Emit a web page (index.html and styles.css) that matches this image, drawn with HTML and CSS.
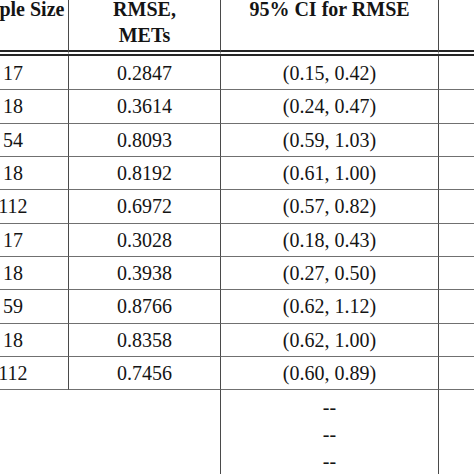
FILE: index.html
```html
<!DOCTYPE html>
<html>
<head>
<meta charset="utf-8">
<link rel="stylesheet" href="styles.css">
</head>
<body>
<table class="stats">
  <colgroup>
    <col class="c-n">
    <col class="c-rmse">
    <col class="c-ci">
    <col class="c-extra">
  </colgroup>
  <thead>
    <tr>
      <th>Sample Size</th>
      <th>RMSE,<br>METs</th>
      <th>95% CI for RMSE</th>
      <th class="last"></th>
    </tr>
  </thead>
  <tbody>
    <tr class="first"><td>17</td><td>0.2847</td><td>(0.15, 0.42)</td><td class="last"></td></tr>
    <tr><td>18</td><td>0.3614</td><td>(0.24, 0.47)</td><td class="last"></td></tr>
    <tr><td>54</td><td>0.8093</td><td>(0.59, 1.03)</td><td class="last"></td></tr>
    <tr><td>18</td><td>0.8192</td><td>(0.61, 1.00)</td><td class="last"></td></tr>
    <tr><td>112</td><td>0.6972</td><td>(0.57, 0.82)</td><td class="last"></td></tr>
    <tr><td>17</td><td>0.3028</td><td>(0.18, 0.43)</td><td class="last"></td></tr>
    <tr><td>18</td><td>0.3938</td><td>(0.27, 0.50)</td><td class="last"></td></tr>
    <tr><td>59</td><td>0.8766</td><td>(0.62, 1.12)</td><td class="last"></td></tr>
    <tr><td>18</td><td>0.8358</td><td>(0.62, 1.00)</td><td class="last"></td></tr>
    <tr><td>112</td><td>0.7456</td><td>(0.60, 0.89)</td><td class="last"></td></tr>
    <tr class="tail">
      <td colspan="2"></td>
      <td class="dashes">--<br>--<br>--</td>
      <td class="last"></td>
    </tr>
  </tbody>
</table>
</body>
</html>
```
FILE: styles.css
```css
html, body {
  margin: 0;
  padding: 0;
  background: #ffffff;
  overflow: hidden;
}

.stats {
  margin: -4px 0 0 -42px;
  border-collapse: separate;
  border-spacing: 0;
  table-layout: fixed;
  width: 581px;
  font-family: "Liberation Serif", "Times New Roman", serif;
  font-size: 20px;
  color: #141414;
}

.c-n { width: 111px; }
.c-rmse { width: 152px; }
.c-ci { width: 218px; }
.c-extra { width: 100px; }

.stats th {
  font-weight: bold;
  line-height: 26px;
  padding: 0 0 2px;
  vertical-align: top;
  text-align: center;
  border-right: 1px solid #4a4a4a;
  border-bottom: 6px double #262626;
}

.stats td {
  padding: 0;
  line-height: 32.33px;
  text-align: center;
  vertical-align: middle;
  border-right: 1px solid #4a4a4a;
  border-bottom: 1px solid #707070;
}

.stats tr.first td {
  padding-top: 1px;
}

.stats .last {
  border-right: none;
}

.stats tr.tail td {
  border-bottom: none;
  line-height: 27px;
  vertical-align: top;
  padding-top: 4px;
}
```
